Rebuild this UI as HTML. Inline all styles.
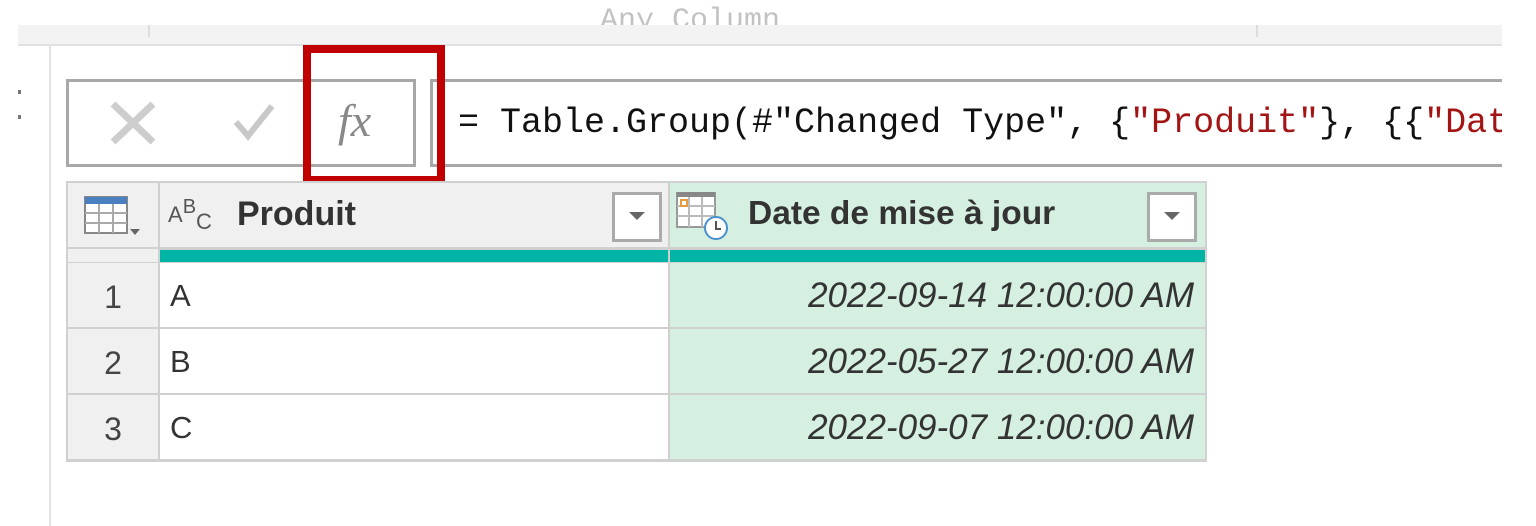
<!DOCTYPE html>
<html><head><meta charset="utf-8"><style>
*{margin:0;padding:0;box-sizing:border-box}
body{width:1536px;height:526px;background:#fff;position:relative;overflow:hidden;font-family:"Liberation Sans",sans-serif}
.a{position:absolute}
</style></head><body>
<div class="a" style="left:600px;top:4px;font-family:'Liberation Mono',monospace;font-size:30px;color:#666">Any Column</div>
<div class="a" style="left:0;top:0;width:1536px;height:25px;background:#fff;opacity:0.6"></div>
<div class="a" style="left:18px;top:25px;width:1484px;height:21px;background:#f3f3f3;border-bottom:2px solid #e1e1e1"></div>
<div class="a" style="left:148px;top:25px;width:2px;height:12px;background:#ddd"></div>
<div class="a" style="left:1256px;top:25px;width:2px;height:12px;background:#ddd"></div>
<div class="a" style="left:49px;top:46px;width:2px;height:480px;background:#e1e1e1"></div>
<div class="a" style="left:18px;top:90px;width:3px;height:4px;background:#777"></div>
<div class="a" style="left:18px;top:115px;width:3px;height:4px;background:#777"></div>
<!-- buttons box -->
<div class="a" style="left:66px;top:79px;width:350px;height:88px;border:3px solid #a8a8a8;background:#fff"></div>
<svg class="a" style="left:108px;top:100px" width="50" height="46"><path d="M5 4 L45 42 M45 4 L5 42" stroke="#cdcdcd" stroke-width="7" fill="none"/></svg>
<svg class="a" style="left:232px;top:102px" width="44" height="40"><path d="M4 20 L16 34 L40 4" stroke="#c8c8c8" stroke-width="6" fill="none"/></svg>
<div class="a" style="left:338px;top:94px;font-family:'Liberation Serif',serif;font-style:italic;font-size:46px;color:#888">fx</div>
<!-- formula box -->
<div class="a" style="left:430px;top:79px;width:1080px;height:88px;border:3px solid #a8a8a8;border-right:none;background:#fff"></div>
<div class="a" style="left:458px;top:103px;font-family:'Liberation Mono',monospace;font-size:35px;color:#111;white-space:nowrap;width:1044px;overflow:hidden">= Table.Group(#"Changed Type", {<span style="color:#a31515">"Produit"</span>}, {{<span style="color:#a31515">"Dat</span></div>
<div class="a" style="left:1502px;top:0;width:34px;height:526px;background:#fff"></div>
<!-- red rect -->
<div class="a" style="left:303px;top:45px;width:142px;height:139px;border:8px solid #c00000"></div>
<!-- table -->
<div class="a" style="left:66px;top:181px;width:1141px;height:281px;background:#d0d0d0"></div>
<div class="a" style="left:68px;top:183px;width:90px;height:64px;background:#f0f0f0"></div>
<svg class="a" style="left:84px;top:196px" width="64" height="44"><rect x="1" y="1" width="42" height="36" fill="#fff" stroke="#888" stroke-width="2"/><rect x="1" y="1" width="42" height="7" fill="#4a7fc0"/><path d="M1 17H43M1 27H43M15 8V37M29 8V37" stroke="#aaa" stroke-width="2"/><path d="M46 33 L56 33 L51 39Z" fill="#666"/></svg>
<div class="a" style="left:160px;top:183px;width:508px;height:64px;background:#f0f0f0"></div>
<div class="a" style="left:168px;top:196px;font-size:22px;color:#555">A<sup style="font-size:20px;vertical-align:9px">B</sup><span style="vertical-align:-7px">C</span></div>
<div class="a" style="left:237px;top:195px;font-size:34px;font-weight:bold;color:#333">Produit</div>
<div class="a" style="left:612px;top:192px;width:50px;height:50px;background:#fff;border:3px solid #aaa"></div>
<svg class="a" style="left:627px;top:210px" width="20" height="12"><path d="M2 2H18L10 10Z" fill="#666"/></svg>
<div class="a" style="left:670px;top:183px;width:535px;height:64px;background:#d5efe0"></div>
<svg class="a" style="left:676px;top:190px" width="56" height="52"><rect x="1" y="3" width="38" height="34" fill="#fff" stroke="#999" stroke-width="2"/><rect x="1" y="2" width="38" height="5" fill="#888"/><path d="M1 16H39M1 26H39M13 7V37M26 7V37" stroke="#bbb" stroke-width="2"/><rect x="5" y="10" width="6" height="6" fill="none" stroke="#e89a3c" stroke-width="2"/><circle cx="40" cy="38" r="11" fill="#fff" stroke="#4a8fd0" stroke-width="2"/><path d="M40 31V39H45" stroke="#555" stroke-width="2" fill="none"/></svg>
<div class="a" style="left:748px;top:195px;font-size:33.5px;font-weight:bold;color:#333">Date de mise à jour</div>
<div class="a" style="left:1147px;top:192px;width:50px;height:50px;background:#fff;border:3px solid #aaa"></div>
<svg class="a" style="left:1162px;top:210px" width="20" height="12"><path d="M2 2H18L10 10Z" fill="#666"/></svg>
<div class="a" style="left:68px;top:249px;width:90px;height:13px;background:#f0f0f0"></div>
<div class="a" style="left:160px;top:250px;width:508px;height:12px;background:#00b5a5"></div>
<div class="a" style="left:670px;top:250px;width:535px;height:12px;background:#00b5a5"></div>
<!-- rows -->
<div class="a" style="left:68px;top:263px;width:90px;height:64px;background:#f0f0f0"></div>
<div class="a" style="left:68px;top:329px;width:90px;height:64px;background:#f0f0f0"></div>
<div class="a" style="left:68px;top:395px;width:90px;height:64px;background:#f0f0f0"></div>
<div class="a" style="left:160px;top:263px;width:508px;height:64px;background:#fff"></div>
<div class="a" style="left:160px;top:329px;width:508px;height:64px;background:#fff"></div>
<div class="a" style="left:160px;top:395px;width:508px;height:64px;background:#fff"></div>
<div class="a" style="left:670px;top:263px;width:535px;height:64px;background:#d5efe0"></div>
<div class="a" style="left:670px;top:329px;width:535px;height:64px;background:#d5efe0"></div>
<div class="a" style="left:670px;top:395px;width:535px;height:64px;background:#d5efe0"></div>
<div class="a" style="left:68px;top:277px;width:90px;text-align:center;font-size:32px;color:#444;line-height:40px">1</div>
<div class="a" style="left:68px;top:343px;width:90px;text-align:center;font-size:32px;color:#444;line-height:40px">2</div>
<div class="a" style="left:68px;top:409px;width:90px;text-align:center;font-size:32px;color:#444;line-height:40px">3</div>
<div class="a" style="left:170px;top:276px;font-size:31px;color:#333;line-height:40px">A</div>
<div class="a" style="left:170px;top:342px;font-size:31px;color:#333;line-height:40px">B</div>
<div class="a" style="left:170px;top:408px;font-size:31px;color:#333;line-height:40px">C</div>
<div class="a" style="left:680px;top:276px;width:514px;text-align:right;font-size:35px;font-style:italic;color:#333;line-height:40px">2022-09-14 12:00:00 AM</div>
<div class="a" style="left:680px;top:342px;width:514px;text-align:right;font-size:35px;font-style:italic;color:#333;line-height:40px">2022-05-27 12:00:00 AM</div>
<div class="a" style="left:680px;top:408px;width:514px;text-align:right;font-size:35px;font-style:italic;color:#333;line-height:40px">2022-09-07 12:00:00 AM</div>
</body></html>
